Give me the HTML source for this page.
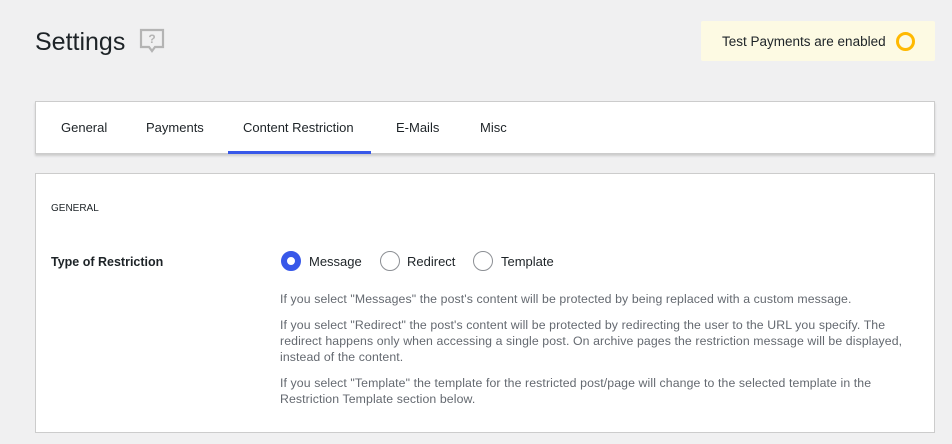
<!DOCTYPE html>
<html><head><style>
body{margin:0;background:#f0f0f1;font-family:"Liberation Sans",sans-serif;width:952px;height:444px;overflow:hidden;position:relative;color:#1d2327}
.abs{position:absolute}
h1{position:absolute;left:35px;top:28px;margin:0;font-weight:400;font-size:25px;color:#1d2327}
.notice{left:701px;top:21px;width:234px;height:40px;background:#fdfae3;border-radius:2px}
.notice span{position:absolute;left:21px;top:13px;font-size:13.5px;color:#1d2327}
.ring{position:absolute;left:195px;top:11px;width:13px;height:13px;border:3px solid #ffb900;border-radius:50%}
.tabs{left:35px;top:101px;width:898px;height:51px;background:#fff;border:1px solid #ccc;box-shadow:0 2px 2px #ccc}
.tab{position:absolute;top:18px;font-size:13px;color:#1d2327}
.ul{position:absolute;left:192px;top:49px;width:143px;height:3px;background:#3858e9}
.box{left:35px;top:173px;width:898px;height:258px;background:#fff;border:1px solid #ccc}
.rad{position:absolute;border:1.5px solid #8c8f94;border-radius:50%;box-sizing:border-box;width:20px;height:20px}
.desc{position:absolute;left:244px;width:640px;font-size:12.3px;color:#646970;line-height:16px;letter-spacing:0.1px}
</style></head><body>
<h1>Settings</h1>
<svg class="abs" style="left:139px;top:28px" width="26" height="26" viewBox="0 0 26 26"><path d="M2 2h22v17H16l-3 4-3-4H2z" fill="none" stroke="#b4b4b4" stroke-width="2.2"/><text x="13" y="15" font-size="12" text-anchor="middle" fill="#b4b4b4" font-family="Liberation Sans" font-weight="bold">?</text></svg>
<div class="abs notice"><span>Test Payments are enabled</span><div class="ring"></div></div>
<div class="abs tabs">
<div class="tab" style="left:25px">General</div>
<div class="tab" style="left:110px">Payments</div>
<div class="tab" style="left:207px">Content Restriction</div>
<div class="tab" style="left:360px">E-Mails</div>
<div class="tab" style="left:444px">Misc</div>
<div class="ul"></div>
</div>
<div class="abs box">
<div class="abs" style="left:15px;top:29px;font-size:10px;color:#1d2327">GENERAL</div>
<div class="abs" style="left:15px;top:81px;font-size:12.5px;font-weight:bold;color:#1d2327">Type of Restriction</div>
<div class="rad" style="left:245px;top:77px;border:6px solid #3858e9"></div>
<div class="abs" style="left:273px;top:80px;font-size:13px">Message</div>
<div class="rad" style="left:344px;top:77px"></div>
<div class="abs" style="left:371px;top:80px;font-size:13px">Redirect</div>
<div class="rad" style="left:437px;top:77px"></div>
<div class="abs" style="left:465px;top:80px;font-size:13px">Template</div>
<div class="desc" style="top:117px">If you select "Messages" the post's content will be protected by being replaced with a custom message.</div>
<div class="desc" style="top:143px">If you select "Redirect" the post's content will be protected by redirecting the user to the URL you specify. The<br>redirect happens only when accessing a single post. On archive pages the restriction message will be displayed,<br>instead of the content.</div>
<div class="desc" style="top:201px">If you select "Template" the template for the restricted post/page will change to the selected template in the<br>Restriction Template section below.</div>
</div>
</body></html>
